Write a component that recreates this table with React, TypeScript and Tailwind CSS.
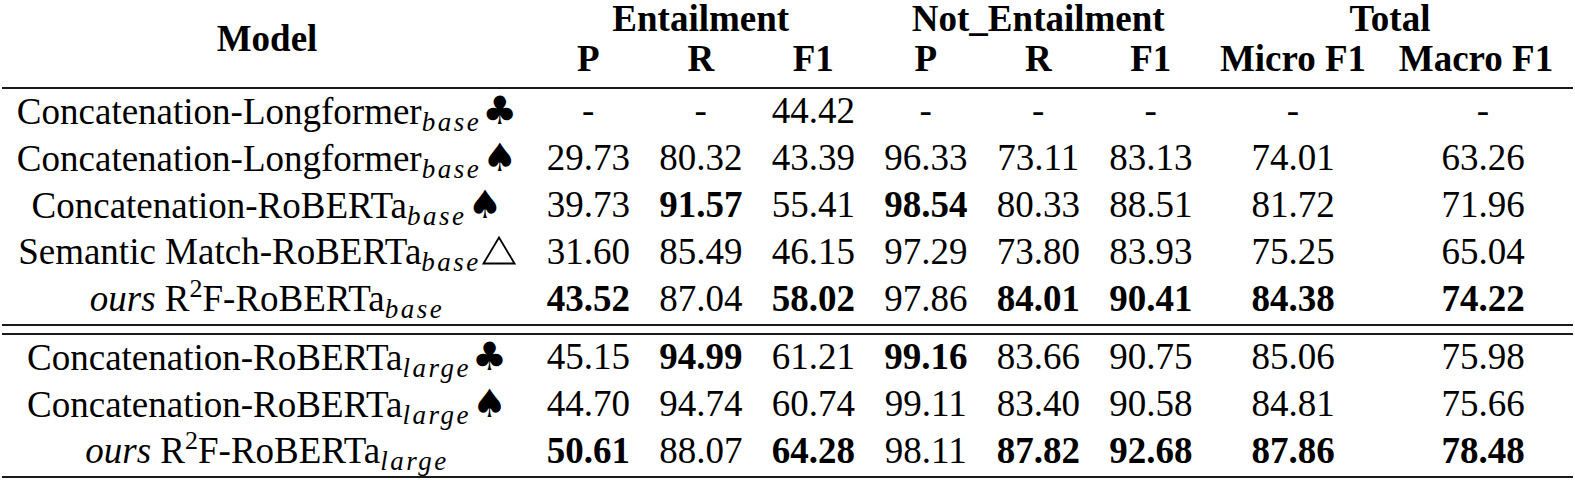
import React from "react";

type Cell = { v: string; b?: boolean };

interface Row {
    name: string;
    size: "base" | "large";
    ours?: boolean;
    mark?: "club" | "spade" | "tri";
    cells: Cell[];
}

const n = (v: string, b = false): Cell => ({ v, b });

const topRows: Row[] = [
    {
        name: "Concatenation-Longformer",
        size: "base",
        mark: "club",
        cells: [n("-"), n("-"), n("44.42"), n("-"), n("-"), n("-"), n("-"), n("-")],
    },
    {
        name: "Concatenation-Longformer",
        size: "base",
        mark: "spade",
        cells: [n("29.73"), n("80.32"), n("43.39"), n("96.33"), n("73.11"), n("83.13"), n("74.01"), n("63.26")],
    },
    {
        name: "Concatenation-RoBERTa",
        size: "base",
        mark: "spade",
        cells: [n("39.73"), n("91.57", true), n("55.41"), n("98.54", true), n("80.33"), n("88.51"), n("81.72"), n("71.96")],
    },
    {
        name: "Semantic Match-RoBERTa",
        size: "base",
        mark: "tri",
        cells: [n("31.60"), n("85.49"), n("46.15"), n("97.29"), n("73.80"), n("83.93"), n("75.25"), n("65.04")],
    },
    {
        name: "RoBERTa",
        size: "base",
        ours: true,
        cells: [n("43.52", true), n("87.04"), n("58.02", true), n("97.86"), n("84.01", true), n("90.41", true), n("84.38", true), n("74.22", true)],
    },
];

const bottomRows: Row[] = [
    {
        name: "Concatenation-RoBERTa",
        size: "large",
        mark: "club",
        cells: [n("45.15"), n("94.99", true), n("61.21"), n("99.16", true), n("83.66"), n("90.75"), n("85.06"), n("75.98")],
    },
    {
        name: "Concatenation-RoBERTa",
        size: "large",
        mark: "spade",
        cells: [n("44.70"), n("94.74"), n("60.74"), n("99.11"), n("83.40"), n("90.58"), n("84.81"), n("75.66")],
    },
    {
        name: "RoBERTa",
        size: "large",
        ours: true,
        cells: [n("50.61", true), n("88.07"), n("64.28", true), n("98.11"), n("87.82", true), n("92.68", true), n("87.86", true), n("78.48", true)],
    },
];

const cols = "grid grid-cols-[530px_112.5px_112.5px_112.5px_112.5px_112.5px_112.5px_172px_194px]";

function Mark({ kind }: { kind?: Row["mark"] }) {
    if (!kind) return null;
    if (kind === "tri") {
        return (
            <svg width="34" height="29" viewBox="0 0 34 29" className="inline-block ml-[1px] align-[-1px]">
                <polygon points="17,1.5 32.5,27.5 1.5,27.5" fill="none" stroke="#000" strokeWidth="1.8" strokeLinejoin="miter" />
            </svg>
        );
    }
    return (
        <span className="[font-family:DejaVu_Sans,sans-serif] text-[39px] ml-[1px]">
            {kind === "club" ? "\u2663" : "\u2660"}
        </span>
    );
}

function ModelName({ row }: { row: Row }) {
    return (
        <div className="text-center whitespace-nowrap">
            {row.ours && (
                <>
                    <span className="italic">ours</span>{" "}R
                    <span className="relative -top-[14px] text-[26px]">2</span>F-
                </>
            )}
            {row.name}
            <span className="relative top-[7px] text-[27px] italic tracking-[2.5px]">{row.size}</span>
            <Mark kind={row.mark} />
        </div>
    );
}

function DataRow({ row }: { row: Row }) {
    return (
        <div className={`${cols} h-[47px] leading-[43px]`}>
            <ModelName row={row} />
            {row.cells.map((c, i) => (
                <div
                    key={i}
                    className={`text-center ${c.b ? "font-bold" : ""} ${i === 7 ? "pl-[14px]" : ""}`}
                >
                    {c.v}
                </div>
            ))}
        </div>
    );
}

export default function App() {
    return (
        <div className="bg-white w-[1575px] h-[480px] pl-[2px] text-black [font-family:Liberation_Serif,Times_New_Roman,serif] text-[37px]">
            <div className="w-[1571px]">
                {/* Header */}
                <div className={`${cols} grid-rows-[40px_47px] leading-[37px] font-bold`}>
                    <div className="row-span-2 flex items-center justify-center pb-[10px]">Model</div>
                    <div className="col-span-3 text-center">Entailment</div>
                    <div className="col-span-3 text-center">Not_Entailment</div>
                    <div className="col-span-2 text-center">Total</div>
                    <div className="text-center">P</div>
                    <div className="text-center">R</div>
                    <div className="text-center">F1</div>
                    <div className="text-center">P</div>
                    <div className="text-center">R</div>
                    <div className="text-center">F1</div>
                    <div className="text-center">Micro F1</div>
                    <div className="text-center">Macro F1</div>
                </div>
                <div className="h-[2px] bg-[#1a1a1a]" />

                {topRows.map((r, i) => (
                    <DataRow key={i} row={r} />
                ))}

                {/* double rule */}
                <div className="h-[2px] bg-[#1a1a1a]" />
                <div className="h-[7px]" />
                <div className="h-[2px] bg-[#1a1a1a]" />

                {bottomRows.map((r, i) => (
                    <DataRow key={i} row={r} />
                ))}
                <div className="h-[2px] bg-[#1a1a1a]" />
            </div>
        </div>
    );
}
